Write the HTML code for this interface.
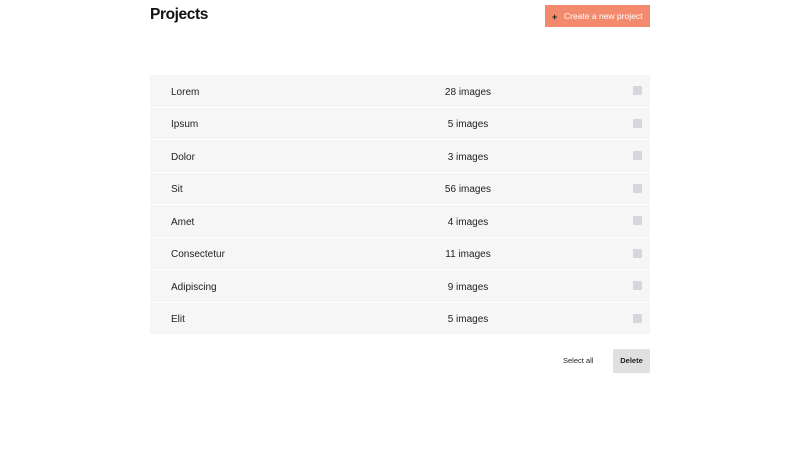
<!DOCTYPE html>
<html><head><style>
body{margin:0;width:800px;height:450px;background:#fff;font-family:"Liberation Sans",sans-serif;position:relative;overflow:hidden}
h1{position:absolute;left:150px;top:6px;margin:0;font-size:15.5px;font-weight:bold;color:#111;letter-spacing:-0.4px}
.btn{position:absolute;left:545px;top:5px;width:105px;height:22px;background:#f38a6d;color:#fff;font-size:8.5px;line-height:22px;box-sizing:border-box;padding-left:19px}
.btn b{position:absolute;left:7px;top:1px;color:#222;font-size:9px}
.row{position:absolute;left:150px;width:500px;height:31.5px;background:#f6f6f6;font-size:10px;color:#222}
.row .n{position:absolute;left:21px;top:11.5px}
.row .c{position:absolute;left:0;width:636px;text-align:center;top:11.5px}
.row .k{position:absolute;left:483px;top:11px;width:9px;height:9px;background:#d4d8de;border-radius:1px}
.sa{position:absolute;left:563px;top:356px;font-size:7.5px;color:#222}
.del{position:absolute;left:613px;top:349px;width:37px;height:24px;background:#e0e0e0;font-size:7.5px;font-weight:bold;text-align:center;line-height:24px;color:#222;border-radius:1px}
</style></head><body>
<h1>Projects</h1>
<div class="btn"><b>+</b>Create a new project</div>
<div class="row" style="top:75px"><span class="n">Lorem</span><span class="c">28 images</span><span class="k"></span></div>
<div class="row" style="top:107.5px"><span class="n">Ipsum</span><span class="c">5 images</span><span class="k"></span></div>
<div class="row" style="top:140px"><span class="n">Dolor</span><span class="c">3 images</span><span class="k"></span></div>
<div class="row" style="top:172.5px"><span class="n">Sit</span><span class="c">56 images</span><span class="k"></span></div>
<div class="row" style="top:205px"><span class="n">Amet</span><span class="c">4 images</span><span class="k"></span></div>
<div class="row" style="top:237.5px"><span class="n">Consectetur</span><span class="c">11 images</span><span class="k"></span></div>
<div class="row" style="top:270px"><span class="n">Adipiscing</span><span class="c">9 images</span><span class="k"></span></div>
<div class="row" style="top:302.5px"><span class="n">Elit</span><span class="c">5 images</span><span class="k"></span></div>
<div class="sa">Select all</div>
<div class="del">Delete</div>
</body></html>
